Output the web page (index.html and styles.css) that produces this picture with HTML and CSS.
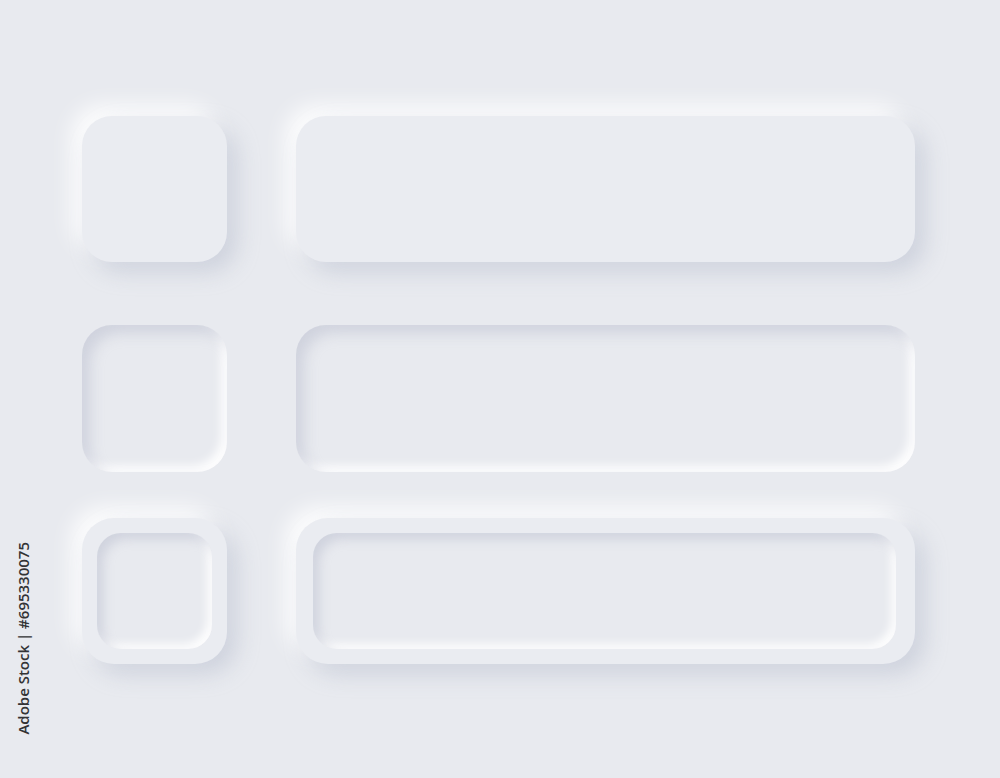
FILE: index.html
```html
<!DOCTYPE html>
<html lang="en">
<head>
<meta charset="utf-8">
<title>Neumorphic list blocks</title>
<link rel="stylesheet" href="styles.css">
</head>
<body>
  <main class="board">
    <div class="row row-raised">
      <div class="tile raised square"></div>
      <div class="tile raised bar"></div>
    </div>
    <div class="row row-inset">
      <div class="tile inset square"></div>
      <div class="tile inset bar"></div>
    </div>
    <div class="row row-framed">
      <div class="tile raised frame square"><div class="well"></div></div>
      <div class="tile raised frame frame-wide bar"><div class="well"></div></div>
    </div>
  </main>
  <div class="credit">Adobe Stock | #695330075</div>
</body>
</html>
```

FILE: styles.css
```css
html, body {
  margin: 0;
  padding: 0;
}

body {
  width: 1000px;
  height: 778px;
  background: #e8eaef;
  font-family: "Open Sans", "Liberation Sans", sans-serif;
  overflow: hidden;
  position: relative;
}

.board {
  padding: 116px 0 0 82px;
  display: flex;
  flex-direction: column;
}

.row {
  display: flex;
  gap: 69px;
  height: 146px;
}

.row-raised { margin-bottom: 63px; }
.row-inset { margin-bottom: 46px; height: 147px; }

.tile {
  border-radius: 30px;
  box-sizing: border-box;
}

.square { width: 145px; }
.bar { width: 619px; }

.raised {
  background: #eaecf1;
  box-shadow:
    10px 10px 22px rgba(168, 174, 194, 0.4),
    -10px -10px 22px rgba(255, 255, 255, 0.95);
}

.inset {
  background: #e8eaef;
  box-shadow:
    inset 8px 8px 14px rgba(168, 174, 194, 0.38),
    inset -6px -6px 10px rgba(255, 255, 255, 0.95);
}

.frame {
  padding: 15px;
  display: flex;
  border-radius: 32px;
}

.frame-wide {
  padding: 15px 19px 15px 17px;
}

.well {
  flex: 1;
  border-radius: 24px;
  background: #e8eaef;
  box-shadow:
    inset 6px 6px 11px rgba(168, 174, 194, 0.38),
    inset -5px -5px 9px rgba(255, 255, 255, 0.95);
}

.credit {
  position: absolute;
  left: 13px;
  top: 542px;
  writing-mode: vertical-rl;
  transform: rotate(180deg);
  font-size: 15px;
  font-weight: 600;
  color: #333335;
  white-space: nowrap;
}
```
